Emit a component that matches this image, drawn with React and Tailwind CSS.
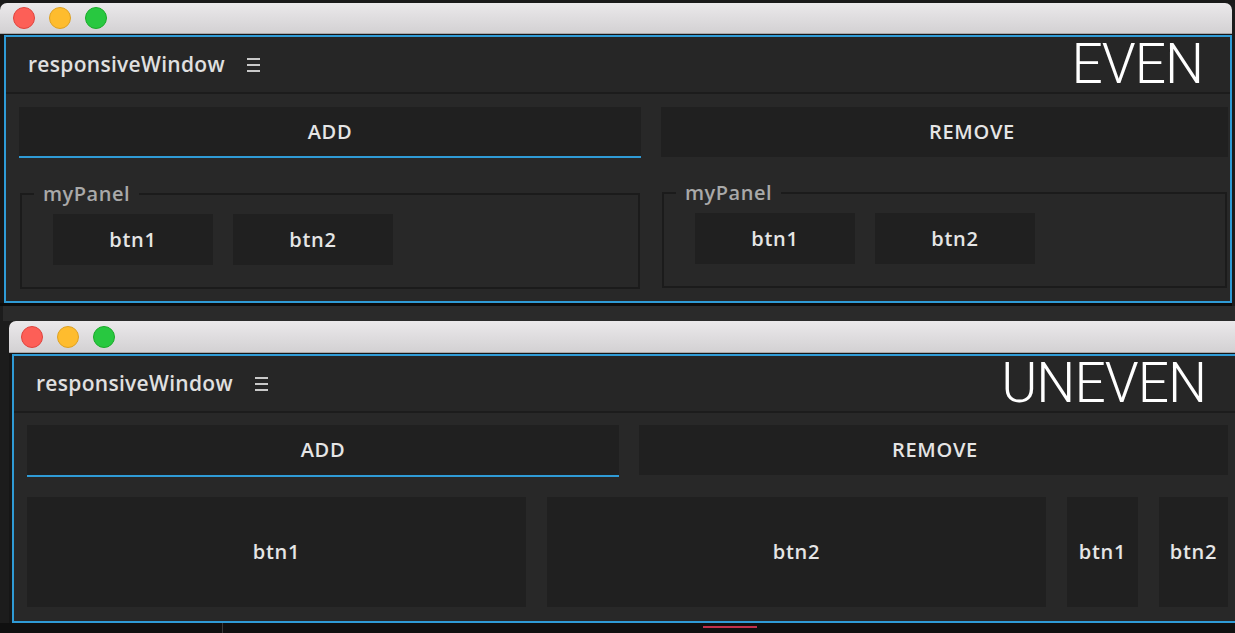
const BLUE = 'border-[#2f9bd6]'

function TrafficLights() {
  return (
    <div className="flex items-center gap-[14px]">
      <span className="h-[22px] w-[22px] rounded-full border border-[#e0443e] bg-[#fd5f57]" />
      <span className="h-[22px] w-[22px] rounded-full border border-[#dea123] bg-[#febc2e]" />
      <span className="h-[22px] w-[22px] rounded-full border border-[#1aab29] bg-[#28c840]" />
    </div>
  )
}

function TitleBar({ height, pad }) {
  return (
    <div
      className={`flex items-center rounded-t-[7px] border-b border-[#a8a7a8] bg-gradient-to-b from-[#ebe9eb] to-[#d3d1d3] ${height} ${pad}`}
    >
      <TrafficLights />
    </div>
  )
}

function Hamburger() {
  return (
    <svg width="13" height="14" viewBox="0 0 13 14" className="text-[#c9c9c9]">
      <rect x="0" y="0" width="13" height="2" fill="currentColor" />
      <rect x="0" y="6" width="13" height="2" fill="currentColor" />
      <rect x="0" y="12" width="13" height="2" fill="currentColor" />
    </svg>
  )
}

function Header({ label, pad }) {
  return (
    <div className={`flex h-[57px] items-center justify-between border-b-2 border-[#1c1c1c] bg-[#262626] ${pad}`}>
      <div className="flex items-center gap-[22px]">
        <span className="text-[21px] font-semibold tracking-[0.3px] text-[#e0e0e0]">responsiveWindow</span>
        <Hamburger />
      </div>
      <span className="font-['Roboto',sans-serif] text-[55px] font-light leading-none tracking-[-1px] text-white">
        {label}
      </span>
    </div>
  )
}

function Btn({ children, className = '' }) {
  return (
    <div
      className={`flex items-center justify-center bg-[#202020] text-[20px] font-semibold tracking-[0.7px] text-[#e5e5e5] ${className}`}
    >
      {children}
    </div>
  )
}

function Panel() {
  return (
    <fieldset className="mx-[1px] mt-[24px] border-2 border-[#1b1b1b] pb-[22px]">
      <legend className="ml-[12px] px-[9px] text-[20px] font-semibold leading-[24px] tracking-[0.5px] text-[#a9a9a9]">
        myPanel
      </legend>
      <div className="ml-[31px] mt-[8px] flex gap-[20px]">
        <Btn className="h-[51px] w-[160px]">btn1</Btn>
        <Btn className="h-[51px] w-[160px]">btn2</Btn>
      </div>
    </fieldset>
  )
}

function EvenWindow() {
  return (
    <div className="w-[1232px]">
      <TitleBar height="h-[31px]" pad="pl-[13px]" />
      <div className="bg-[#161616] pl-[4px] pt-[1px]">
        <div className={`border-2 ${BLUE} bg-[#282828]`}>
          <Header label="EVEN" pad="pl-[22px] pr-[27px]" />
          <div className="grid grid-cols-[622px_567px] gap-x-[20px] pb-[12px] pl-[13px] pt-[13px]">
            <div>
              <Btn className={`h-[51px] border-b-2 ${BLUE}`}>ADD</Btn>
              <Panel />
            </div>
            <div>
              <Btn className="h-[50px] pl-[55px]">REMOVE</Btn>
              <Panel />
            </div>
          </div>
        </div>
      </div>
    </div>
  )
}

function UnevenWindow() {
  return (
    <div className="ml-[9px] w-[1240px]">
      <TitleBar height="h-[32px]" pad="pl-[12px]" />
      <div className="bg-[#161616] pl-[3px] pt-[1px]">
        <div className={`border-2 border-r-0 ${BLUE} bg-[#282828]`}>
          <Header label="UNEVEN" pad="pl-[22px] pr-[43px]" />
          <div className="pl-[13px] pt-[12px]">
            <div className="flex gap-[20px]">
              <Btn className={`h-[52px] w-[592px] border-b-2 ${BLUE}`}>ADD</Btn>
              <Btn className="h-[50px] w-[589px] pl-[3px]">REMOVE</Btn>
            </div>
            <div className="mt-[20px] flex gap-[21px] pb-[14px]">
              <Btn className="h-[110px] w-[499px]">btn1</Btn>
              <Btn className="h-[110px] w-[499px]">btn2</Btn>
              <Btn className="h-[110px] w-[71px]">btn1</Btn>
              <Btn className="h-[110px] w-[69px]">btn2</Btn>
            </div>
          </div>
        </div>
      </div>
    </div>
  )
}

export default function App() {
  return (
    <div className="h-[633px] w-[1235px] overflow-hidden bg-[#1c1c1c] font-['Open_Sans',sans-serif]">
      <div className="h-[3px] bg-[#1a1a1a]" />
      <EvenWindow />
      <div className="h-[3px] w-[1232px] bg-[#0c0c0c]" />
      <div className="ml-[3px] h-[15px] bg-[#2a2a2a]" />
      <UnevenWindow />
      <div className="flex h-[20px] bg-[#101010]">
        <div className="ml-[222px] h-full w-[1px] bg-[#3a3a3a]" />
        <div className="ml-[480px] mt-[3px] h-[2px] w-[54px] bg-[#c4314b]" />
      </div>
    </div>
  )
}
